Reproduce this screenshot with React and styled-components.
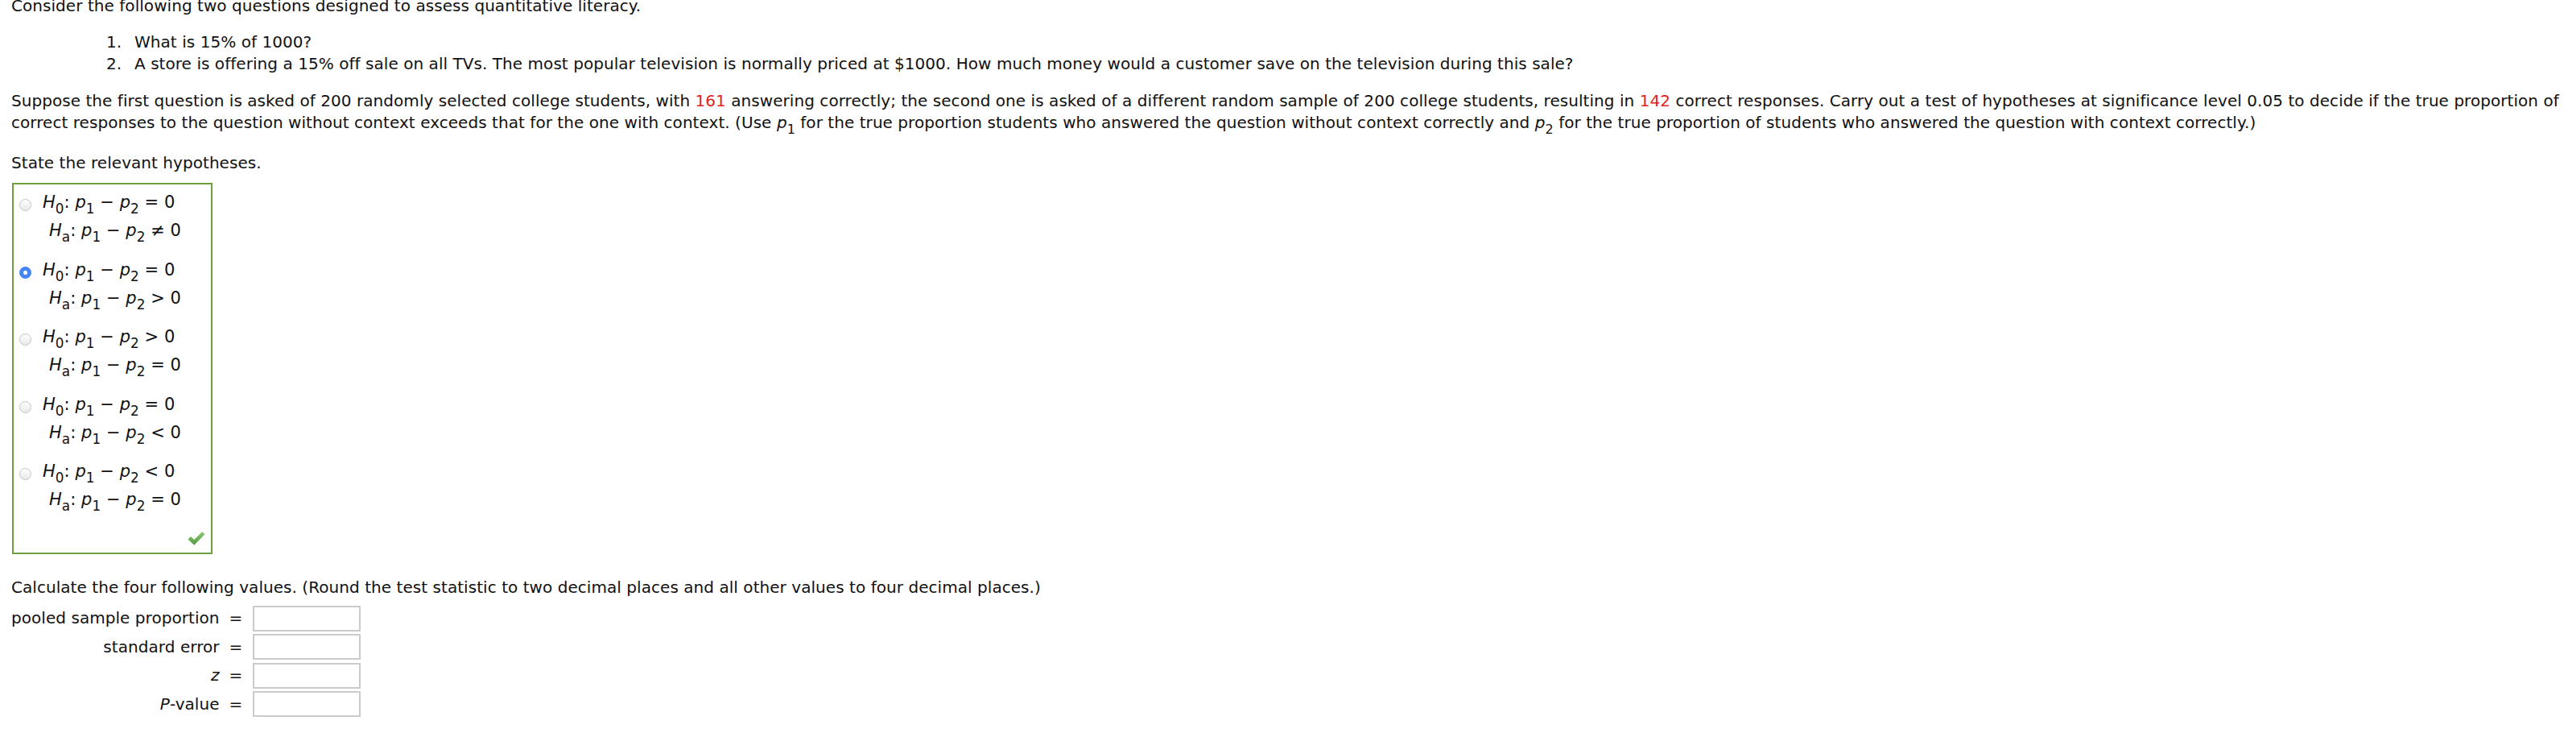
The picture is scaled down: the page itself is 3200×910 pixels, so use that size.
import React from "react";
import styled, { createGlobalStyle } from "styled-components";

const GlobalStyle = createGlobalStyle`
  html, body { margin: 0; padding: 0; background: #fff; }
  body {
    font-family: "DejaVu Sans", Verdana, sans-serif;
    font-size: 20px;
    letter-spacing: 0.05px;
    color: #111;
  }
`;

const Page = styled.div`
  padding: 0 14px;
  margin-top: -6px;
  line-height: 27px;
`;

const Intro = styled.p`
  margin: 0;
  white-space: nowrap;
`;

const QuestionList = styled.ol`
  list-style: none;
  margin: 18px 0 0;
  padding: 0 0 0 118px;
  counter-reset: q;
`;

const QuestionItem = styled.li`
  counter-increment: q;
  display: flex;
  white-space: nowrap;
  &::before {
    content: counter(q) ".";
    width: 35px;
    flex: none;
  }
`;

const Scenario = styled.p`
  margin: 19px 0 0;
  white-space: nowrap;
`;

const Red = styled.span`
  color: #e3241b;
`;

const Var = styled.i`
  font-style: italic;
`;

const Sub = styled.sub`
  font-size: 0.8em;
  vertical-align: -0.42em;
  line-height: 0;
  font-style: normal;
`;

const Prompt = styled.p`
  margin: 23px 0 0;
`;

const ChoiceBox = styled.div`
  margin: 10.5px 0 0 1px;
  width: 249px;
  box-sizing: border-box;
  border: 2px solid #6f9e3f;
  padding: 7.5px 7px 8px 6.5px;
  display: flex;
  flex-direction: column;
  gap: 13.5px;
`;

const Choice = styled.label`
  display: flex;
  align-items: flex-start;
  gap: 14.5px;
`;

const Radio = styled.span`
  flex: none;
  width: 15px;
  height: 15px;
  margin-top: 11px;
  box-sizing: border-box;
  border-radius: 50%;
  border: 1px solid ${(p) => (p.$checked ? "#3a7ced" : "#c4c4c4")};
  background: ${(p) =>
    p.$checked
      ? "radial-gradient(circle, #fff 0 2.2px, #4287f5 2.9px)"
      : "linear-gradient(#ffffff, #e9e9e9)"};
`;

const Formula = styled.div`
  display: flex;
  flex-direction: column;
  font-size: 21px;
`;

const FormulaLine = styled.div`
  height: 35px;
  line-height: 31px;
  white-space: nowrap;
  padding-left: ${(p) => (p.$indent ? 8 : 0)}px;
`;

const CheckRow = styled.div`
  display: flex;
  justify-content: flex-end;
  height: 19px;
  margin-top: 5px;
`;

const Calc = styled.p`
  margin: 28.5px 0 0;
  white-space: nowrap;
`;

const AnswerGrid = styled.div`
  display: grid;
  grid-template-columns: max-content max-content 134px;
  grid-auto-rows: 32px;
  row-gap: 3.67px;
  align-items: center;
  margin-top: 8.5px;
`;

const FieldLabel = styled.span`
  justify-self: end;
  white-space: nowrap;
`;

const Equals = styled.span`
  padding: 0 13px 0 12px;
`;

const Field = styled.input`
  box-sizing: border-box;
  width: 134px;
  height: 32px;
  margin: 0;
  padding: 0 6px;
  border: 2px solid #cbcbcb;
  background: #fff;
  font: inherit;
  outline: none;
`;

const P = ({ n }) => (
  <>
    <Var>p</Var>
    <Sub>{n}</Sub>
  </>
);

const Hyp = ({ h, rel, indent }) => (
  <FormulaLine $indent={indent}>
    <Var>H</Var>
    <Sub>{h}</Sub>: <P n="1" /> − <P n="2" /> {rel} 0
  </FormulaLine>
);

const options = [
  ["=", "≠", false],
  ["=", ">", true],
  [">", "=", false],
  ["=", "<", false],
  ["<", "=", false],
];

const CheckMark = () => (
  <svg width="22" height="19" viewBox="0 0 22 19">
    <defs>
      <linearGradient id="ck" x1="0" y1="0" x2="0" y2="1">
        <stop offset="0" stopColor="#94c97a" />
        <stop offset="1" stopColor="#4f9a3c" />
      </linearGradient>
    </defs>
    <path d="M0.5 10.5 L4 7 L8.2 11 L18.2 1 L21.5 4.3 L8.2 17.8 Z" fill="url(#ck)" />
  </svg>
);

export default function App() {
  return (
    <>
      <GlobalStyle />
      <Page>
        <Intro>Consider the following two questions designed to assess quantitative literacy.</Intro>
        <QuestionList>
          <QuestionItem>What is 15% of 1000?</QuestionItem>
          <QuestionItem>
            A store is offering a 15% off sale on all TVs. The most popular television is normally priced at
            $1000. How much money would a customer save on the television during this sale?
          </QuestionItem>
        </QuestionList>
        <Scenario>
          Suppose the first question is asked of 200 randomly selected college students, with <Red>161</Red>{" "}
          answering correctly; the second one is asked of a different random sample of 200 college students,
          resulting in <Red>142</Red> correct responses. Carry out a test of hypotheses at significance level
          0.05 to decide if the true proportion of
          <br />
          correct responses to the question without context exceeds that for the one with context. (Use{" "}
          <P n="1" /> for the true proportion students who answered the question without context correctly and{" "}
          <P n="2" /> for the true proportion of students who answered the question with context correctly.)
        </Scenario>
        <Prompt>State the relevant hypotheses.</Prompt>
        <ChoiceBox>
          {options.map(([a, b, checked], i) => (
            <Choice key={i}>
              <Radio $checked={checked} />
              <Formula>
                <Hyp h="0" rel={a} />
                <Hyp h="a" rel={b} indent />
              </Formula>
            </Choice>
          ))}
          <CheckRow>
            <CheckMark />
          </CheckRow>
        </ChoiceBox>
        <Calc>
          Calculate the four following values. (Round the test statistic to two decimal places and all other
          values to four decimal places.)
        </Calc>
        <AnswerGrid>
          <FieldLabel>pooled sample proportion</FieldLabel>
          <Equals>=</Equals>
          <Field />
          <FieldLabel>standard error</FieldLabel>
          <Equals>=</Equals>
          <Field />
          <FieldLabel>
            <Var>z</Var>
          </FieldLabel>
          <Equals>=</Equals>
          <Field />
          <FieldLabel>
            <Var>P</Var>-value
          </FieldLabel>
          <Equals>=</Equals>
          <Field />
        </AnswerGrid>
      </Page>
    </>
  );
}
